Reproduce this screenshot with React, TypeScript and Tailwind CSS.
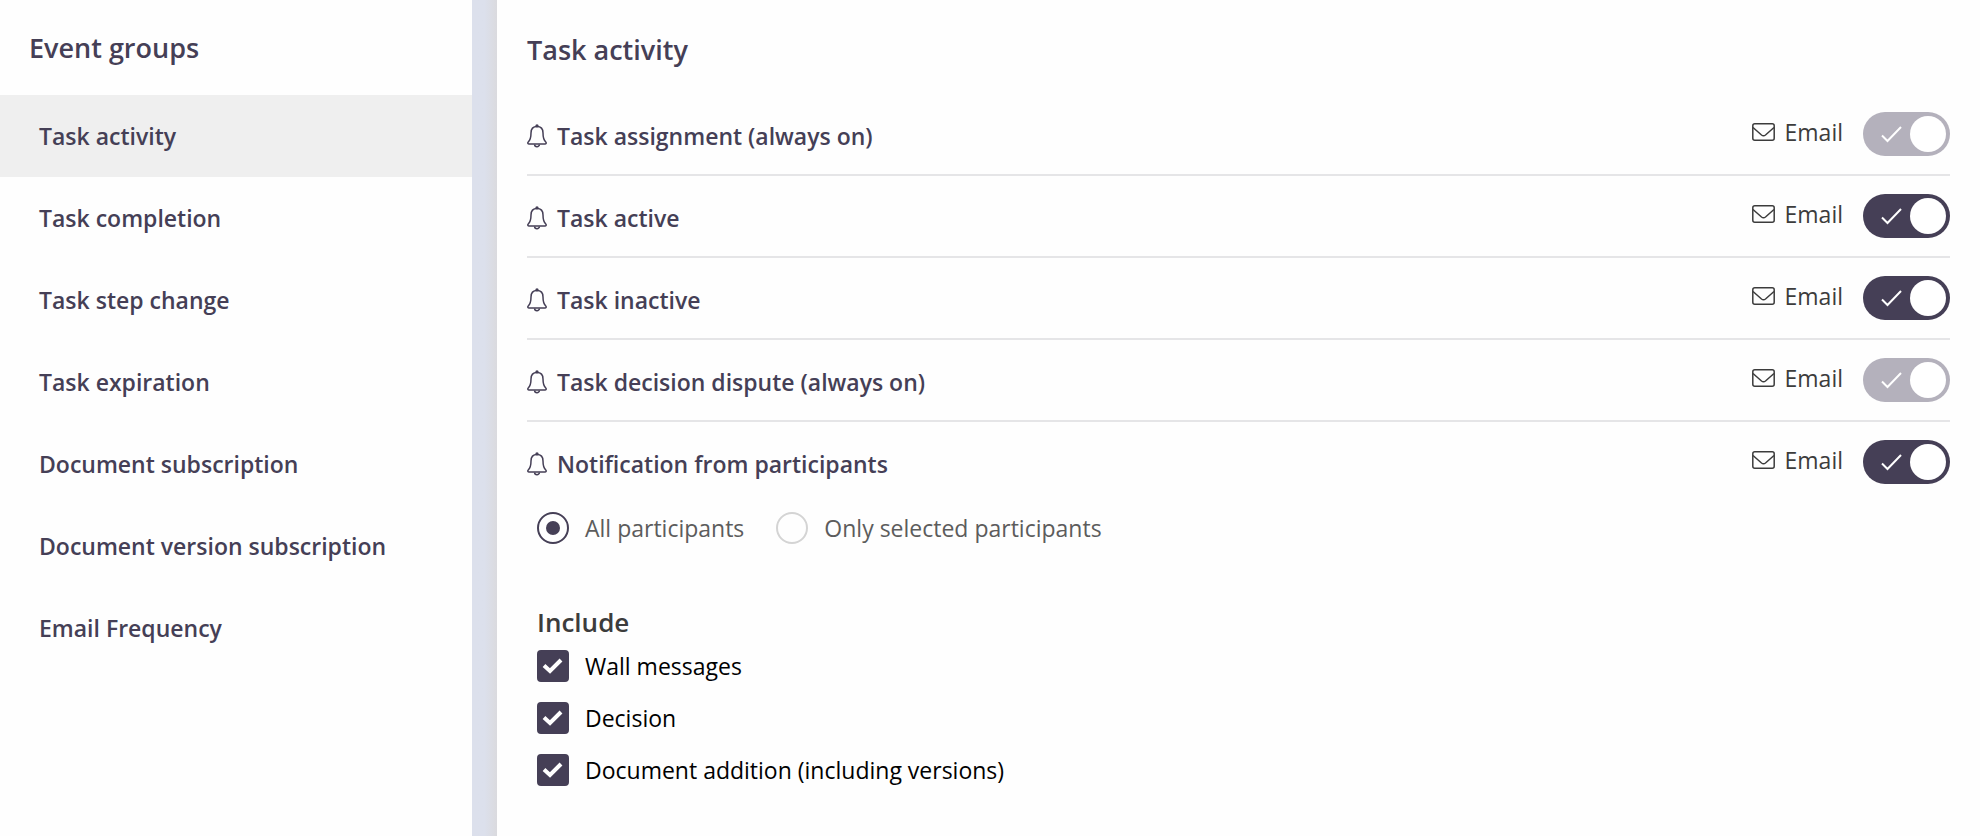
import { useState } from "react";

type Notification = {
  id: string;
  label: string;
  locked?: boolean;
};

const EVENT_GROUPS = [
  "Task activity",
  "Task completion",
  "Task step change",
  "Task expiration",
  "Document subscription",
  "Document version subscription",
  "Email Frequency",
];

const NOTIFICATIONS: Notification[] = [
  { id: "assignment", label: "Task assignment (always on)", locked: true },
  { id: "active", label: "Task active" },
  { id: "inactive", label: "Task inactive" },
  { id: "dispute", label: "Task decision dispute (always on)", locked: true },
  { id: "participants", label: "Notification from participants" },
];

const PARTICIPANTS = ["All participants", "Only selected participants"];

const INCLUDES = [
  "Wall messages",
  "Decision",
  "Document addition (including versions)",
];

export default function App() {
  const [group, setGroup] = useState(EVENT_GROUPS[0]);

  return (
    <div className="flex min-h-screen bg-[#fefefe] font-['Open_Sans',sans-serif] text-[23px] leading-8 text-[#453f56]">
      <aside className="w-[472px] shrink-0">
        <h2 className="px-[29px] pt-7 pb-[27px] text-[27px] leading-10 font-semibold">
          Event groups
        </h2>
        <nav>
          {EVENT_GROUPS.map((name) => (
            <button
              key={name}
              type="button"
              onClick={() => setGroup(name)}
              className={`block h-[82px] w-full px-[39px] text-left font-semibold ${
                name === group ? "bg-[#efefef]" : ""
              }`}
            >
              {name}
            </button>
          ))}
        </nav>
      </aside>

      <div className="w-[25px] shrink-0 bg-linear-to-r from-[#dce0ec] from-50% to-[#dadade]" />

      <main className="min-w-0 flex-1 px-[30px]">
        <h2 className="pt-[30px] pb-6 text-[27px] leading-10 font-semibold">
          Task activity
        </h2>
        <ul>
          {NOTIFICATIONS.map((item) => (
            <NotificationRow key={item.id} item={item} />
          ))}
        </ul>
        <ParticipantOptions />
      </main>
    </div>
  );
}

function NotificationRow({ item }: { item: Notification }) {
  const [on, setOn] = useState(true);

  return (
    <li className="flex h-[82px] items-center border-b-2 border-[#e5e5e7] last:border-transparent">
      <span className="flex items-center gap-2.5 pt-1 font-semibold">
        <BellIcon />
        {item.label}
      </span>
      <label className="ml-auto flex items-center text-[#3c3c3c]">
        <span className="mr-5 flex items-center gap-2.5 pb-1">
          <MailIcon />
          Email
        </span>
        <input
          type="checkbox"
          role="switch"
          className="peer sr-only"
          checked={on}
          disabled={item.locked}
          onChange={(e) => setOn(e.target.checked)}
        />
        <span className="flex h-11 w-[87px] flex-row-reverse items-center justify-between rounded-full bg-[#cccccc] pr-1 pl-4 peer-checked:bg-[#453f56] peer-disabled:bg-[#b4b1bc]">
          <span className="size-9 rounded-full bg-white" />
          <svg width="24" height="20" viewBox="0 0 24 20" fill="none">
            <path d="M3 11.5 8.5 17 22 3" stroke="white" strokeWidth="2" />
          </svg>
        </span>
      </label>
    </li>
  );
}

function ParticipantOptions() {
  const [who, setWho] = useState(PARTICIPANTS[0]);
  const [included, setIncluded] = useState(INCLUDES);

  function toggle(name: string) {
    setIncluded((prev) =>
      prev.includes(name) ? prev.filter((n) => n !== name) : [...prev, name]
    );
  }

  return (
    <div className="px-2.5">
      <div className="flex gap-8 pt-2 text-[#5c5c5c]">
        {PARTICIPANTS.map((name) => (
          <label key={name} className="flex items-center gap-4">
            <input
              type="radio"
              name="participants"
              checked={who === name}
              onChange={() => setWho(name)}
              className="grid size-8 appearance-none place-items-center rounded-full border-2 border-[#d4d4d4] before:size-3.5 before:rounded-full checked:border-[#453f56] checked:before:bg-[#453f56]"
            />
            {name}
          </label>
        ))}
      </div>

      <h3 className="pt-[58px] text-[26px] leading-10 font-semibold text-[#3c3c3c]">
        Include
      </h3>
      <div className="flex flex-col gap-5 pt-2 text-black">
        {INCLUDES.map((name) => (
          <label key={name} className="flex items-center gap-4">
            <span className="grid size-8 place-items-center">
              <input
                type="checkbox"
                checked={included.includes(name)}
                onChange={() => toggle(name)}
                className="peer col-start-1 row-start-1 size-8 appearance-none rounded-sm border-2 border-[#453f56] checked:bg-[#453f56]"
              />
              <svg
                width="22"
                height="18"
                viewBox="0 0 22 18"
                fill="none"
                className="pointer-events-none col-start-1 row-start-1 opacity-0 peer-checked:opacity-100"
              >
                <path d="M2 8.500 8 14 19 3" stroke="white" strokeWidth="4" />
              </svg>
            </span>
            {name}
          </label>
        ))}
      </div>
    </div>
  );
}

function BellIcon() {
  return (
    <svg
      width="20"
      height="24"
      viewBox="0 0 20 24"
      fill="none"
      stroke="currentColor"
      strokeWidth="1.5"
      strokeLinejoin="round"
      className="shrink-0"
    >
      <path d="M10 2.600C6 2.600 4 5.400 4 9c0 4.800-.8 7-2.600 8.700-1 1-.8 2.300.4 2.300h16.400c1.200 0 1.400-1.300.4-2.300C16.800 16 16 13.800 16 9c0-3.600-2-6.400-6-6.400Z" />
      <path d="M7.600 20.500a2.400 2.200 0 0 0 4.800 0" />
      <circle cx="10" cy="1.800" r=".9" fill="currentColor" />
    </svg>
  );
}

function MailIcon() {
  return (
    <svg
      width="23"
      height="18"
      viewBox="0 0 23 18"
      fill="none"
      stroke="currentColor"
      strokeWidth="1.5"
      className="shrink-0"
    >
      <rect x=".8" y=".8" width="21.400" height="16.400" rx="2" />
      <path d="M1 4.500 9.500 12q2 1.600 4 0L22 4.500" />
    </svg>
  );
}
